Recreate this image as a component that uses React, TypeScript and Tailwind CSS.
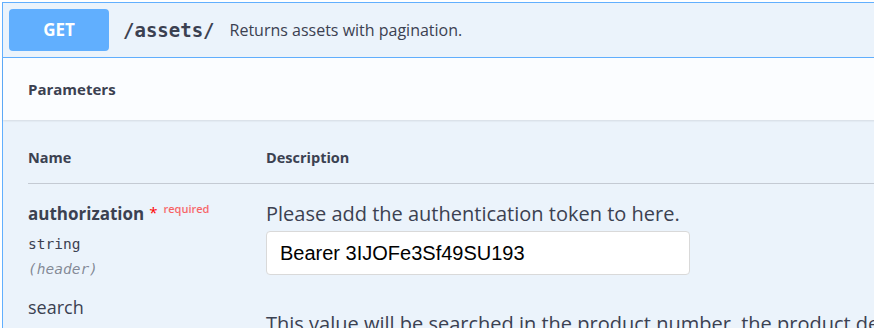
import React from 'react'

const sans = "font-['Open_Sans',sans-serif]"
const mono = "font-['DejaVu_Sans_Mono',monospace]"

export default function App() {
  return (
    <div className="w-[874px] h-[328px] overflow-hidden bg-white pl-[2px] pt-[2px]">
      <div className={`w-[1100px] border border-[#61affe] bg-[#ebf3fb] text-[#3b4151] ${sans}`}>
        {/* summary */}
        <div className="flex items-center h-[55px] px-[6px] border-b border-[#61affe]">
          <div className="w-[100px] h-[42px] shrink-0 rounded-[4px] bg-[#61affe] flex items-center justify-center text-white text-[17px] font-bold">
            GET
          </div>
          <span className={`ml-[14px] text-[19px] font-semibold ${mono}`}>/assets/</span>
          <span className="ml-[15px] text-[16px]">Returns assets with pagination.</span>
        </div>

        {/* parameters header */}
        <div className="h-[62px] flex items-center px-[25px] bg-[#fbfdff] shadow-[0_1px_2px_rgba(0,0,0,0.1)]">
          <span className="text-[15px] font-bold">Parameters</span>
        </div>

        {/* table */}
        <div className="px-[25px] pt-[28px]">
          <div className="flex border-b border-[#c4cad3] pb-[15px] text-[14.5px] font-bold leading-[20px]">
            <div className="w-[238px] shrink-0">Name</div>
            <div>Description</div>
          </div>

          <div className="flex pt-[17px]">
            <div className="w-[238px] shrink-0 flex flex-col">
              <div className="flex items-start">
                <span className="text-[17px] font-bold leading-[26px]">authorization</span>
                <span className="ml-[5px] text-[#ff0000] text-[15px] leading-[22px]">*</span>
                <span className="ml-[6px] text-[11px] font-semibold text-[#ff0000]/60 leading-[16px]">required</span>
              </div>
              <div className={`mt-[7px] text-[14.5px] leading-[20px] ${mono}`}>string</div>
              <div className={`mt-[5px] text-[14.5px] italic text-[#3b4151]/60 leading-[20px] ${mono}`}>(header)</div>
              <div className="mt-[16px] text-[18px] leading-[24px]">search</div>
            </div>
            <div className="flex flex-col">
              <p className="text-[20px] leading-[26px]">Please add the authentication token to here.</p>
              <div className="mt-[4px] w-[424px] h-[44px] bg-white border border-[#d9d9d9] rounded-[4px] flex items-center px-[13px] font-['Liberation_Sans',sans-serif] text-[20px] text-black">
                Bearer 3IJOFe3Sf49SU193
              </div>
              <p className="mt-[35px] text-[20px] leading-[28px] whitespace-nowrap">
                This value will be searched in the product number, the product description.
              </p>
            </div>
          </div>
        </div>
      </div>
    </div>
  )
}
